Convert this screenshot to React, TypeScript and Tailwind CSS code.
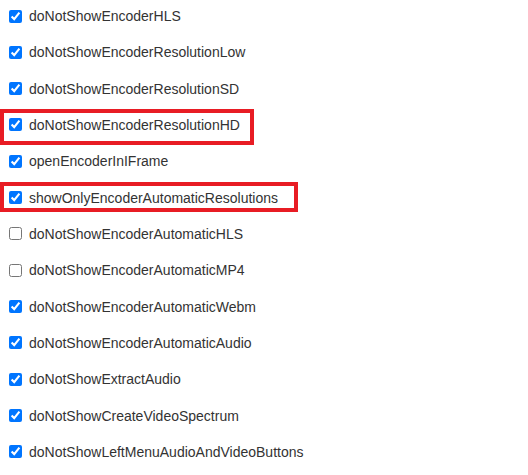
const items: { name: string; checked: boolean }[] = [
  { name: "doNotShowEncoderHLS", checked: true },
  { name: "doNotShowEncoderResolutionLow", checked: true },
  { name: "doNotShowEncoderResolutionSD", checked: true },
  { name: "doNotShowEncoderResolutionHD", checked: true },
  { name: "openEncoderInIFrame", checked: true },
  { name: "showOnlyEncoderAutomaticResolutions", checked: true },
  { name: "doNotShowEncoderAutomaticHLS", checked: false },
  { name: "doNotShowEncoderAutomaticMP4", checked: false },
  { name: "doNotShowEncoderAutomaticWebm", checked: true },
  { name: "doNotShowEncoderAutomaticAudio", checked: true },
  { name: "doNotShowExtractAudio", checked: true },
  { name: "doNotShowCreateVideoSpectrum", checked: true },
  { name: "doNotShowLeftMenuAudioAndVideoButtons", checked: true },
];

export default function App() {
  return (
    <div className="relative w-[528px] h-[475px] bg-white overflow-hidden font-['Liberation_Sans',Arial,sans-serif] text-[14px] text-[#333]">
      {/* option list */}
      <div className="flex flex-col gap-[16.33px] pt-[6px]">
        {items.map((item) => (
          <label key={item.name} className="flex items-center h-5 pl-[9px]">
            <input
              type="checkbox"
              defaultChecked={item.checked}
              className="m-0 w-[13px] h-[13px] shrink-0"
            />
            <span className="ml-[7px] leading-5">{item.name}</span>
          </label>
        ))}
      </div>

      {/* highlight boxes */}
      <div className="absolute left-0 top-[109px] w-[254px] h-[36px] border-4 border-[#e81c24]" />
      <div className="absolute left-0 top-[182px] w-[298px] h-[30px] border-4 border-[#e81c24]" />
    </div>
  );
}
